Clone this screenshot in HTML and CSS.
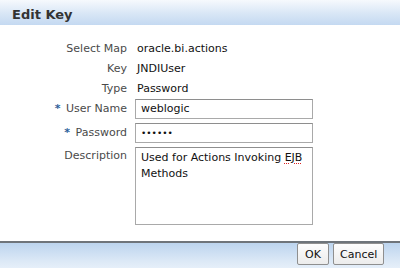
FILE: index.html
```html
<!DOCTYPE html>
<html>
<head>
    <meta charset="UTF-8">
    <title>Edit Key</title>
    <link rel="stylesheet" href="styles.css">
</head>
<body>
    <div class="dialog">
        <!-- title bar -->
        <div class="dlg_head">Edit Key</div>

        <!-- form -->
        <div class="dlg_body">
            <div class="form_row">
                <span class="lbl">Select Map</span>
                <span class="val">oracle.bi.actions</span>
            </div>
            <div class="form_row">
                <span class="lbl">Key</span>
                <span class="val">JNDIUser</span>
            </div>
            <div class="form_row">
                <span class="lbl">Type</span>
                <span class="val">Password</span>
            </div>
            <div class="form_row input_row">
                <span class="lbl"><i class="req">*</i> User Name</span>
                <div class="field">weblogic</div>
            </div>
            <div class="form_row input_row">
                <span class="lbl"><i class="req">*</i> Password</span>
                <div class="field pwd">&#8226;&#8226;&#8226;&#8226;&#8226;&#8226;</div>
            </div>
            <div class="form_row area_row">
                <span class="lbl">Description</span>
                <div class="field area">Used for Actions Invoking <span class="spell">EJB</span> Methods</div>
            </div>
        </div>

        <!-- buttons -->
        <div class="dlg_foot">
            <button class="btn">OK</button>
            <button class="btn">Cancel</button>
        </div>
    </div>
</body>
</html>
```

FILE: styles.css
```css
*{margin:0;padding:0;box-sizing:border-box;}
html,body{width:100%;height:100%;background:#fff;}
body{font-family:"DejaVu Sans","Liberation Sans",sans-serif;font-size:11px;color:#222;}

.dialog{width:400px;height:268px;display:flex;flex-direction:column;}

/* title bar */
.dlg_head{height:25px;padding:7px 0 0 12px;font-size:13px;font-weight:bold;color:#333;
    background:linear-gradient(#f6f9fd,#d8e6f6 55%,#c4d9f1);}

/* form area */
.dlg_body{flex:1;padding-top:13px;}
.form_row{display:flex;align-items:center;height:20px;}
.lbl{width:127px;text-align:right;color:#4a4a4a;}
.val{margin-left:10px;color:#111;}
.req{font-style:normal;color:#2d5f9a;font-weight:bold;margin-right:2px;}

.input_row{height:24px;align-items:flex-start;}
.input_row .lbl{padding-top:4px;}
.field{margin:1px 0 0 8px;width:178px;height:20px;border:1px solid #a9a9a9;border-top-color:#8e8e8e;padding:2px 5px;color:#111;}
.pwd{font-size:9px;line-height:15px;}

.area_row{align-items:flex-start;height:auto;}
.area_row .lbl{padding-top:3px;}
.area{height:78px;line-height:16px;padding:2px 5px;}
.spell{text-decoration:underline dotted #d22;text-underline-offset:2px;}

/* button bar */
.dlg_foot{height:27px;border-top:2px solid #6e747a;display:flex;justify-content:flex-end;align-items:flex-start;gap:4px;padding:0 16px 0 0;
    background:linear-gradient(#bcd4ee,#dbe8f6 70%,#e6eff9);}
.btn{height:22px;padding:0 6px;font-family:inherit;font-size:11px;color:#111;
    border:1px solid #8f8f8f;border-radius:2px;background:linear-gradient(#fdfdfd,#ececec);}
.btn:first-child{width:32px;}
.btn:last-child{width:51px;}
```
